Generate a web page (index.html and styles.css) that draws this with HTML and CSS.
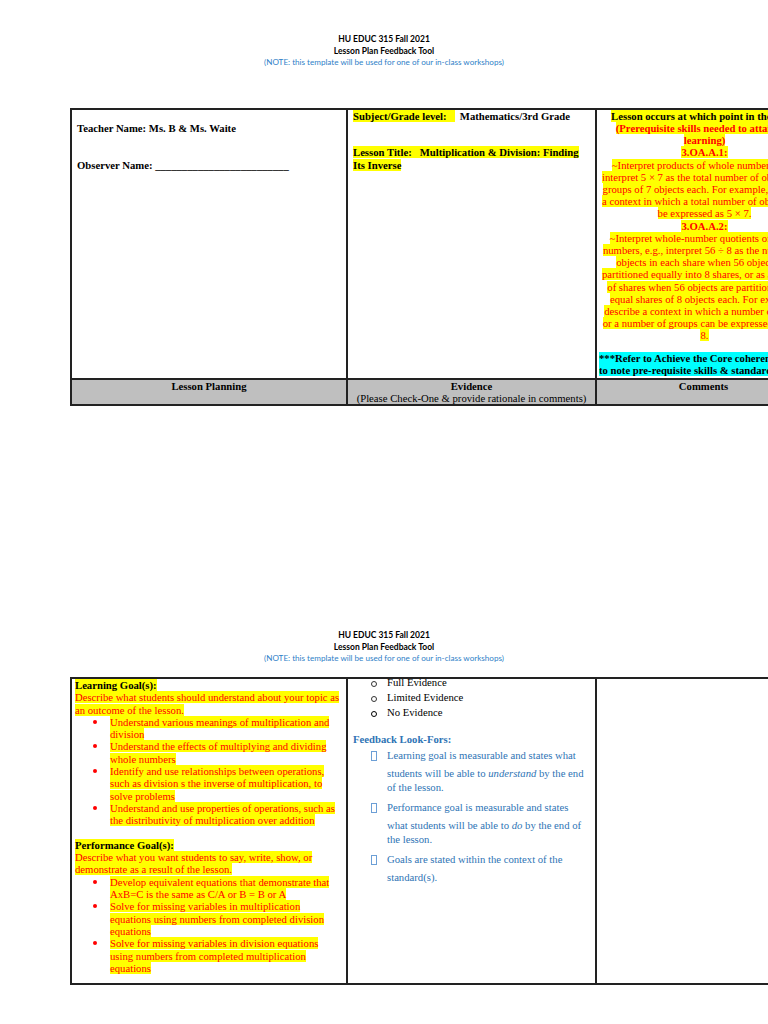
FILE: index.html
```html
<!DOCTYPE html>
<html lang="en">
<head>
<meta charset="utf-8">
<title>Lesson Plan Feedback Tool</title>
<link rel="stylesheet" href="styles.css">
</head>
<body>
<div class="sheet">

  <section class="page page1">
    <header class="doc-head">
      <p class="title">HU EDUC 315 Fall 2021</p>
      <p class="title">Lesson Plan Feedback Tool</p>
      <p class="note">(NOTE: this template will be used for one of our in-class workshops)</p>
    </header>

    <table class="plan">
      <colgroup><col class="c1"><col class="c2"><col class="c3"></colgroup>
      <tr class="top-row">
        <td class="cell">
          <p class="ln">&nbsp;</p>
          <p class="ln b">Teacher Name: Ms. B &amp; Ms. Waite</p>
          <p class="ln">&nbsp;</p>
          <p class="ln">&nbsp;</p>
          <p class="ln b">Observer Name: _________________________</p>
        </td>
        <td class="cell">
          <p class="ln b"><span class="hl">Subject/Grade level:&nbsp;&nbsp;&nbsp;</span>&nbsp;&nbsp;Mathematics/3rd Grade</p>
          <p class="ln">&nbsp;</p>
          <p class="ln">&nbsp;</p>
          <p class="ln b"><span class="hl">Lesson Title:&nbsp;&nbsp;&nbsp;Multiplication &amp; Division: Finding<br>Its Inverse</span></p>
        </td>
        <td class="cell center">
          <p class="ln b"><span class="hl">Lesson occurs at which point in the unit?</span></p>
          <p class="ln b red"><span class="hl">(Prerequisite skills needed to attain the<br>learning)</span></p>
          <p class="ln b red"><span class="hl">3.OA.A.1:</span></p>
          <p class="ln red"><span class="hl">~Interpret products of whole numbers, e.g.,<br>interpret 5 × 7 as the total number of objects in 5<br>groups of 7 objects each. For example, describe<br>a context in which a total number of objects can<br>be expressed as 5 × 7.</span></p>
          <p class="ln b red"><span class="hl">3.OA.A.2:</span></p>
          <p class="ln red"><span class="hl">~Interpret whole-number quotients of whole<br>numbers, e.g., interpret 56 ÷ 8 as the number of<br>objects in each share when 56 objects are<br>partitioned equally into 8 shares, or as a number<br>of shares when 56 objects are partitioned into<br>equal shares of 8 objects each. For example,<br>describe a context in which a number of shares<br>or a number of groups can be expressed as 56 ÷<br>8.</span></p>
          <p class="ln b left refer"><span class="hl-cyan">***Refer to Achieve the Core coherence map<br>to note pre-requisite skills &amp; standards</span></p>
        </td>
      </tr>
      <tr class="head-row">
        <th>Lesson Planning</th>
        <th>Evidence<br><span class="sub">(Please Check-One &amp; provide rationale in comments)</span></th>
        <th>Comments</th>
      </tr>
    </table>
  </section>

  <section class="page page2">
    <header class="doc-head">
      <p class="title">HU EDUC 315 Fall 2021</p>
      <p class="title">Lesson Plan Feedback Tool</p>
      <p class="note">(NOTE: this template will be used for one of our in-class workshops)</p>
    </header>

    <table class="plan">
      <colgroup><col class="c1"><col class="c2"><col class="c3"></colgroup>
      <tr class="goal-row">
        <td class="cell goals">
          <p class="ln b"><span class="hl">Learning Goal(s):</span></p>
          <p class="ln red"><span class="hl">Describe what students should understand about your topic as<br>an outcome of the lesson.</span></p>
          <ul class="bullets">
            <li><span class="hl">Understand various meanings of multiplication and<br>division</span></li>
            <li><span class="hl">Understand the effects of multiplying and dividing<br>whole numbers</span></li>
            <li><span class="hl">Identify and use relationships between operations,<br>such as division s the inverse of multiplication, to<br>solve problems</span></li>
            <li><span class="hl">Understand and use properties of operations, such as<br>the distributivity of multiplication over addition</span></li>
          </ul>
          <p class="ln">&nbsp;</p>
          <p class="ln b"><span class="hl">Performance Goal(s):</span></p>
          <p class="ln red"><span class="hl">Describe what you want students to say, write, show, or<br>demonstrate as a result of the lesson.</span></p>
          <ul class="bullets">
            <li><span class="hl">Develop equivalent equations that demonstrate that<br>AxB=C is the same as C/A or B = B or A</span></li>
            <li><span class="hl">Solve for missing variables in multiplication<br>equations using numbers from completed division<br>equations</span></li>
            <li><span class="hl">Solve for missing variables in division equations<br>using numbers from completed multiplication<br>equations</span></li>
          </ul>
        </td>
        <td class="cell evidence">
          <ul class="checks">
            <li>Full Evidence</li>
            <li>Limited Evidence</li>
            <li class="strong-o">No Evidence</li>
          </ul>
          <p class="lookfor-title">Feedback Look-Fors:</p>
          <ul class="lookfors">
            <li><span class="l1">Learning goal is measurable and states what</span><span class="l2">students will be able to <i>understand</i> by the end</span><span class="l3">of the lesson.</span></li>
            <li><span class="l1">Performance goal is measurable and states</span><span class="l2">what students will be able to <i>do</i> by the end of</span><span class="l3">the lesson.</span></li>
            <li><span class="l1">Goals are stated within the context of the</span><span class="l2">standard(s).</span></li>
          </ul>
        </td>
        <td class="cell"></td>
      </tr>
    </table>
  </section>

</div>
</body>
</html>
```

FILE: styles.css
```css
* {
  box-sizing: border-box;
  margin: 0;
  padding: 0;
}

html, body {
  background: #ffffff;
}

body {
  margin: 0;
  width: 768px;
  overflow: hidden;
}

.sheet {
  width: 768px;
  overflow: hidden;
}

/* ---------- document header ---------- */
.doc-head {
  text-align: center;
  font-family: Lato, "Liberation Sans", sans-serif;
  line-height: 11.6px;
}

.title {
  font-size: 8.5px;
  font-weight: 700;
  color: #000;
}

.note {
  font-size: 8.1px;
  color: #2f7fc8;
}

.page1 {
  padding-top: 34px;
}

.page1 .plan {
  margin-top: 39px;
}

.page2 {
  margin-top: 224px;
}

.page2 .plan {
  margin-top: 12px;
}

/* ---------- table ---------- */
.plan {
  border-collapse: collapse;
  table-layout: fixed;
  width: 740px;
  margin-left: 70px;
  font-family: "Liberation Serif", "Times New Roman", serif;
  font-size: 10.7px;
  line-height: 12.2px;
  color: #000;
}

.c1 { width: 276px; }
.c2 { width: 249px; }
.c3 { width: 215px; }

.plan td,
.plan th {
  border: 2px solid #222;
  vertical-align: top;
}

.cell {
  padding: 0 3px 0 5px;
  white-space: nowrap;
}

.top-row td {
  height: 270px;
}

.center {
  text-align: center;
}

.ln {
  display: block;
}

.b {
  font-weight: 700;
}

.red {
  color: #ff0000;
}

.left {
  text-align: left;
}

.refer {
  margin-top: 10px;
  margin-left: -3px;
}

.hl {
  background: #ffff00;
}

.hl-cyan {
  background: #00ffff;
}

.head-row th {
  background: #bfbfbf;
  height: 24px;
  font-weight: 700;
  text-align: center;
  padding-top: 0;
}

.head-row .sub {
  font-weight: 400;
}

/* ---------- page 2 ---------- */
.goal-row td {
  height: 306px;
}

.goals {
  padding-left: 3px;
  line-height: 12.3px;
}

.bullets {
  list-style: none;
  color: #ff0000;
}

.bullets li {
  position: relative;
  padding-left: 35px;
}

.bullets li::before {
  content: "";
  position: absolute;
  left: 18px;
  top: 4px;
  width: 4px;
  height: 4px;
  border-radius: 50%;
  background: #ff0000;
}

.evidence {
  padding-left: 5px;
}

.checks {
  list-style: none;
  line-height: 15px;
  margin-top: -4px;
}

.checks li {
  position: relative;
  padding-left: 34px;
}

.checks li::before {
  content: "";
  position: absolute;
  left: 18px;
  top: 6px;
  width: 4px;
  height: 4px;
  border: 1px solid #333;
  border-radius: 50%;
}

.checks li.strong-o::before {
  border-width: 1.4px;
  border-color: #000;
}

.lookfor-title {
  margin-top: 13px;
  font-weight: 700;
  color: #2e74b5;
}

.lookfors {
  list-style: none;
  color: #2e74b5;
  margin-top: 3px;
}

.lookfors li {
  position: relative;
  padding-left: 34px;
  margin-top: 6px;
}

.lookfors li:first-child {
  margin-top: 0;
}

.lookfors li::before {
  content: "";
  position: absolute;
  left: 18px;
  top: 3px;
  width: 4px;
  height: 8px;
  border: 1px solid #6c9fd6;
}

.lookfors span {
  display: block;
  line-height: 14px;
}

.lookfors .l2 {
  margin-top: 4px;
}
```
